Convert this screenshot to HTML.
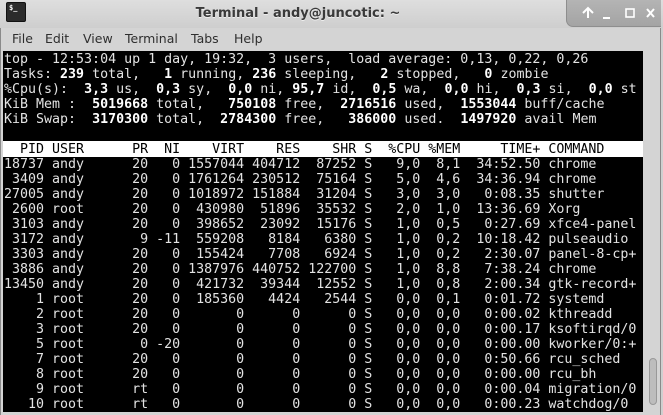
<!DOCTYPE html>
<html><head><meta charset="utf-8"><style>
html,body{margin:0;padding:0;width:663px;height:415px;overflow:hidden;background:#cfcfcf;}
.win{position:absolute;left:0;top:0;width:661px;height:415px;background:#d4d4d4;border:1px solid #8a8a8a;border-bottom:none;border-radius:5px 5px 0 0;box-sizing:border-box;}
.title{position:absolute;left:0;top:0;width:663px;height:28px;background:linear-gradient(#dedede,#cecece);}
.ttext{position:absolute;left:0;width:596px;top:6px;text-align:center;font:bold 13px "DejaVu Sans","Liberation Sans",sans-serif;color:#3a3a3a;text-shadow:0 1px 0 #eee;}
.btns{position:absolute;left:566px;top:0;width:94px;height:26px;background:linear-gradient(#b4b4b4,#a4a4a4);border-radius:0 0 0 7px;border-left:1px solid #8e8e8e;border-bottom:1px solid #8e8e8e;}
.icon{position:absolute;left:6px;top:2px;width:18px;height:18px;background:#2b2b2b;border:1px solid #111;border-radius:2px;color:#fff;font:bold 7px "DejaVu Sans Mono",monospace;}
.menu{position:absolute;top:31px;font:12.5px "DejaVu Sans","Liberation Sans",sans-serif;color:#2e2e2e;}
.term{position:absolute;left:3px;top:51px;width:640px;height:361px;background:#000;}
pre{position:absolute;left:1px;top:1px;margin:0;font:13.3px "DejaVu Sans Mono","Liberation Mono",monospace;line-height:15px;color:#e3e3e3;}
b{color:#fff;}
.hdr{display:block;background:#fff;color:#000;width:640px;margin-left:-1px;padding-left:1px;margin-top:-1px;padding-top:1px;}
.sb{position:absolute;left:643px;top:51px;width:17px;height:361px;background:#d4d4d4;}
.thumb{position:absolute;left:649px;top:358px;width:8px;height:47px;background:#bdbdbd;border:1px solid #999;border-radius:4px;box-sizing:border-box;}
</style></head><body>
<div class="win"></div>
<div class="title"></div>
<div class="icon"><span style="position:absolute;left:2px;top:1px">$_</span></div>
<div class="ttext">Terminal - andy@juncotic: ~</div>
<div class="btns">
<svg width="94" height="26" style="position:absolute;left:0;top:0">
<g fill="none" stroke="#fff" stroke-width="2">
<path d="M21 18V9M16 13l5-5 5 5"/>
<path d="M36 18h7"/>
<rect x="59" y="9" width="8" height="8" stroke-width="1.6"/>
<path d="M80 9l7 8M87 9l-7 8"/>
</g></svg></div>
<div class="menu" style="left:12px">File</div>
<div class="menu" style="left:45px">Edit</div>
<div class="menu" style="left:83px">View</div>
<div class="menu" style="left:125px">Terminal</div>
<div class="menu" style="left:191px">Tabs</div>
<div class="menu" style="left:234px">Help</div>
<div class="term"><pre>top - 12:53:04 up 1 day, 19:32,  3 users,  load average: 0,13, 0,22, 0,26
Tasks: <b>239</b> total,   <b>1</b> running, <b>236</b> sleeping,   <b>2</b> stopped,   <b>0</b> zombie
%Cpu(s):  <b>3,3</b> us,  <b>0,3</b> sy,  <b>0,0</b> ni, <b>95,7</b> id,  <b>0,5</b> wa,  <b>0,0</b> hi,  <b>0,3</b> si,  <b>0,0</b> st
KiB Mem :  <b>5019668</b> total,   <b>750108</b> free,  <b>2716516</b> used,  <b>1553044</b> buff/cache
KiB Swap:  <b>3170300</b> total,  <b>2784300</b> free,   <b>386000</b> used.  <b>1497920</b> avail Mem

<span class="hdr">  PID USER      PR  NI    VIRT    RES    SHR S  %CPU %MEM     TIME+ COMMAND</span>18737 andy      20   0 1557044 404712  87252 S   9,0  8,1  34:52.50 chrome
 3409 andy      20   0 1761264 230512  75164 S   5,0  4,6  34:36.94 chrome
27005 andy      20   0 1018972 151884  31204 S   3,0  3,0   0:08.35 shutter
 2600 root      20   0  430980  51896  35532 S   2,0  1,0  13:36.69 Xorg
 3103 andy      20   0  398652  23092  15176 S   1,0  0,5   0:27.69 xfce4-panel
 3172 andy       9 -11  559208   8184   6380 S   1,0  0,2  10:18.42 pulseaudio
 3303 andy      20   0  155424   7708   6924 S   1,0  0,2   2:30.07 panel-8-cp+
 3886 andy      20   0 1387976 440752 122700 S   1,0  8,8   7:38.24 chrome
13450 andy      20   0  421732  39344  12552 S   1,0  0,8   2:00.34 gtk-record+
    1 root      20   0  185360   4424   2544 S   0,0  0,1   0:01.72 systemd
    2 root      20   0       0      0      0 S   0,0  0,0   0:00.02 kthreadd
    3 root      20   0       0      0      0 S   0,0  0,0   0:00.17 ksoftirqd/0
    5 root       0 -20       0      0      0 S   0,0  0,0   0:00.00 kworker/0:+
    7 root      20   0       0      0      0 S   0,0  0,0   0:50.66 rcu_sched
    8 root      20   0       0      0      0 S   0,0  0,0   0:00.00 rcu_bh
    9 root      rt   0       0      0      0 S   0,0  0,0   0:00.04 migration/0
   10 root      rt   0       0      0      0 S   0,0  0,0   0:00.23 watchdog/0</pre></div>
<div class="sb"></div>
<div class="thumb"></div>
</body></html>
